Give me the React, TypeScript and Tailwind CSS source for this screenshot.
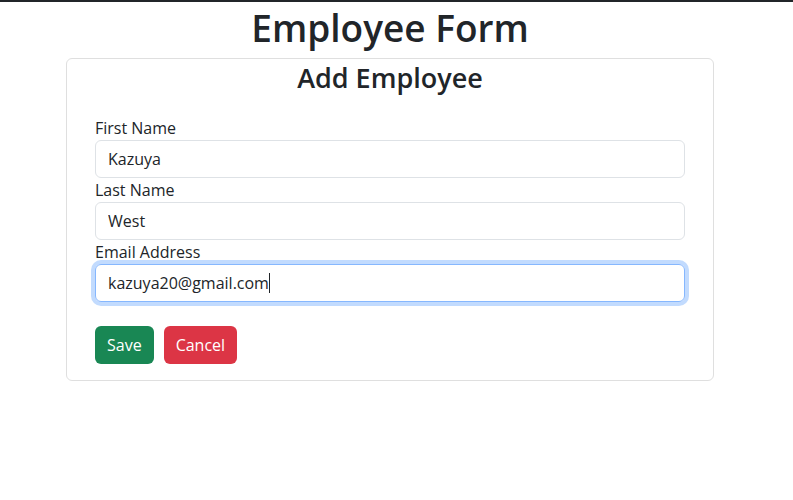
import { useState } from 'react';

const font = 'font-["Segoe_UI","Open_Sans",sans-serif]';

function Field({
  label,
  value,
  focused = false,
}: {
  label: string;
  value: string;
  focused?: boolean;
}) {
  return (
    <div className="flex flex-col">
      <label className="text-base leading-6 text-[#212529]">{label}</label>
      <div className="relative">
        <input
          readOnly
          value={value}
          className={
            focused
              ? 'h-[38px] w-full rounded-[6px] border border-[#86b7fe] px-3 text-base text-[#212529] shadow-[0_0_0_4px_rgba(13,110,253,0.25)] outline-none'
              : 'h-[38px] w-full rounded-[6px] border border-[#dee2e6] px-3 text-base text-[#212529] outline-none'
          }
        />
        {focused && (
          <div className="pointer-events-none absolute inset-y-0 left-[13px] flex items-center text-base">
            <span className="invisible">{value}</span>
            <span className="h-[20px] w-px bg-[#212529]" />
          </div>
        )}
      </div>
    </div>
  );
}

export default function App() {
  const [first] = useState('Kazuya');
  const [last] = useState('West');
  const [email] = useState('kazuya20@gmail.com');

  return (
    <div className={`min-h-[500px] bg-white text-[#212529] ${font}`}>
      <div className="h-[2px] w-full bg-[#212529]" />
      <h1 className="mt-[2px] w-[648px] ml-[66px] text-center text-[37px] font-semibold leading-[48px]">
        Employee Form
      </h1>
      <div className="ml-[66px] mt-[6px] w-[648px] rounded-[6px] border border-[#dfdfdf]">
        <h2 className="text-center text-[27px] font-semibold leading-[38px]">
          Add Employee
        </h2>
        <form className="px-[28px] pb-[16px] pt-[19px]">
          <Field label="First Name" value={first} />
          <Field label="Last Name" value={last} />
          <Field label="Email Address" value={email} focused />
          <div className="mt-6 flex gap-[10px]">
            <button
              type="button"
              className="h-[38px] rounded-[6px] bg-[#198754] px-3 text-base text-white"
            >
              Save
            </button>
            <button
              type="button"
              className="h-[38px] rounded-[6px] bg-[#dc3545] px-3 text-base text-white"
            >
              Cancel
            </button>
          </div>
        </form>
      </div>
    </div>
  );
}
